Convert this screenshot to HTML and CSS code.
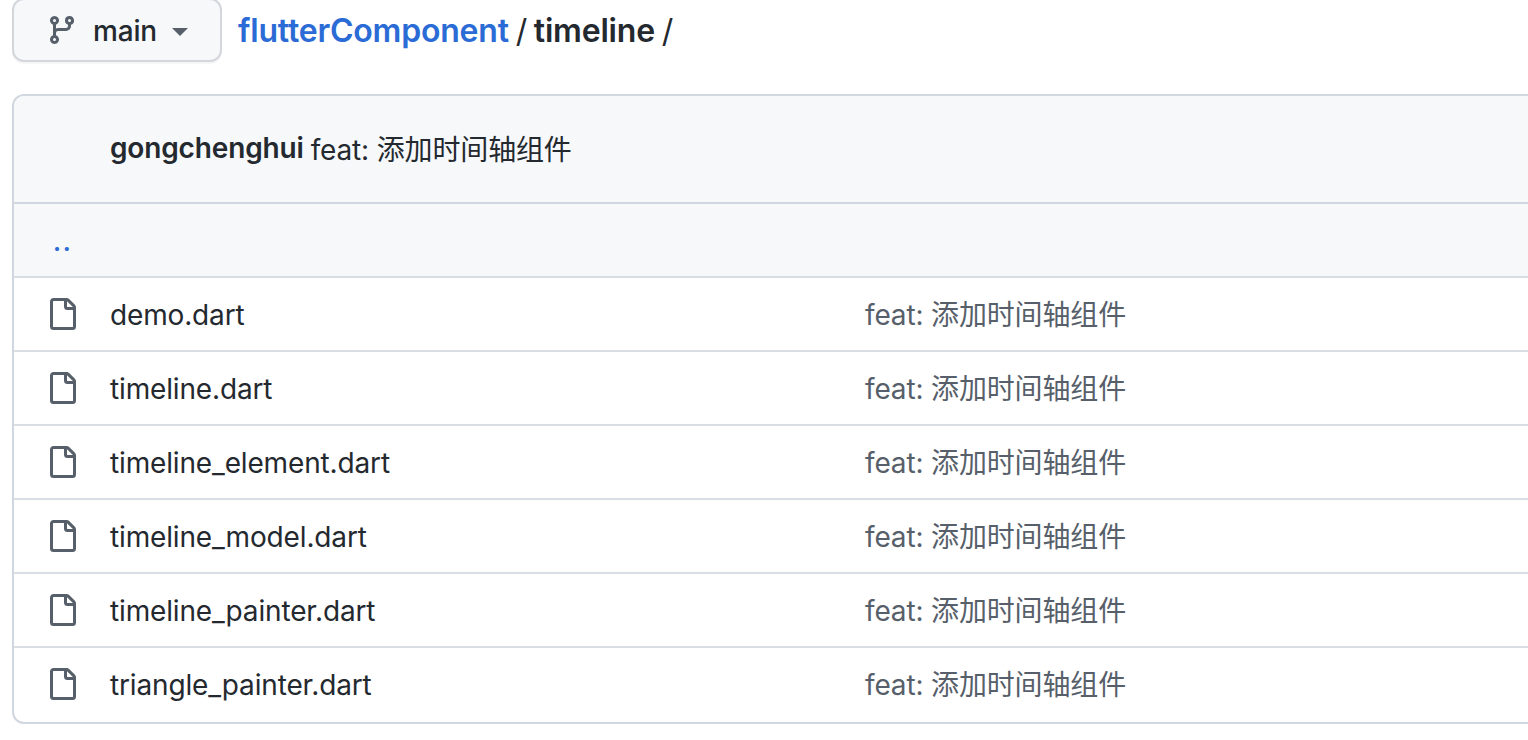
FILE: index.html
```html
<!DOCTYPE html>
<html>
<head>
  <title>flutterComponent/timeline</title>
  <link rel="stylesheet" href="styles.css">
</head>
<body>
  <div class="file-nav">
    <button class="branch-btn" type="button">
      <svg class="branch-icon" viewBox="0 0 16 16"><path d="M9.5 3.25a2.25 2.25 0 1 1 3 2.122V6A2.5 2.5 0 0 1 10 8.5H6a1 1 0 0 0-1 1v1.128a2.251 2.251 0 1 1-1.5 0V5.372a2.25 2.25 0 1 1 1.5 0v1.836A2.493 2.493 0 0 1 6 7h4a1 1 0 0 0 1-1v-.628A2.25 2.25 0 0 1 9.5 3.25Zm-6 0a.75.75 0 1 0 1.5 0 .75.75 0 0 0-1.5 0Zm8.25-.75a.75.75 0 1 0 0 1.5.75.75 0 0 0 0-1.5ZM4.25 12a.75.75 0 1 0 0 1.5.75.75 0 0 0 0-1.5Z"/></svg>
      <span class="branch-name">main</span>
      <span class="caret"></span>
    </button>
    <h2 class="breadcrumb"><a href="#">flutterComponent</a> <span class="sep">/</span> <strong>timeline</strong> <span class="sep">/</span></h2>
  </div>

  <div class="file-box">
    <div class="commit-row">
      <strong>gongchenghui</strong> <span>feat: 添加时间轴组件</span>
    </div>
    <div class="up-row"><a href="#">. .</a></div>

    <div class="file-row">
      <svg class="file-icon" viewBox="0 0 16 16"><use href="#file"/></svg>
      <a class="file-name" href="#">demo.dart</a>
      <span class="file-msg">feat: 添加时间轴组件</span>
    </div>
    <div class="file-row">
      <svg class="file-icon" viewBox="0 0 16 16"><use href="#file"/></svg>
      <a class="file-name" href="#">timeline.dart</a>
      <span class="file-msg">feat: 添加时间轴组件</span>
    </div>
    <div class="file-row">
      <svg class="file-icon" viewBox="0 0 16 16"><use href="#file"/></svg>
      <a class="file-name" href="#">timeline_element.dart</a>
      <span class="file-msg">feat: 添加时间轴组件</span>
    </div>
    <div class="file-row">
      <svg class="file-icon" viewBox="0 0 16 16"><use href="#file"/></svg>
      <a class="file-name" href="#">timeline_model.dart</a>
      <span class="file-msg">feat: 添加时间轴组件</span>
    </div>
    <div class="file-row">
      <svg class="file-icon" viewBox="0 0 16 16"><use href="#file"/></svg>
      <a class="file-name" href="#">timeline_painter.dart</a>
      <span class="file-msg">feat: 添加时间轴组件</span>
    </div>
    <div class="file-row">
      <svg class="file-icon" viewBox="0 0 16 16"><use href="#file"/></svg>
      <a class="file-name" href="#">triangle_painter.dart</a>
      <span class="file-msg">feat: 添加时间轴组件</span>
    </div>
  </div>

  <svg class="icon-defs" width="0" height="0">
    <symbol id="file" viewBox="0 0 16 16"><path d="M2 1.75C2 .784 2.784 0 3.75 0h6.586c.464 0 .909.184 1.237.513l2.914 2.914c.329.328.513.773.513 1.237v9.586A1.75 1.75 0 0 1 13.25 16h-9.5A1.75 1.75 0 0 1 2 14.25Zm1.75-.25a.25.25 0 0 0-.25.25v12.5c0 .138.112.25.25.25h9.5a.25.25 0 0 0 .25-.25V6h-2.75A1.75 1.75 0 0 1 9 4.25V1.5Zm6.75.062V4.25c0 .138.112.25.25.25h2.688l-.011-.013-2.914-2.914-.013-.011Z"/></symbol>
  </svg>
</body>
</html>
```

FILE: styles.css
```css
body {
  font-family: Inter, "Noto Sans CJK SC", sans-serif;
  font-size: 28px;
  letter-spacing: -0.15px;
  color: #24292f;
  background-color: #fff;
  margin: 0;
  padding: 0 0 0 12px;
  height: 740px;
  overflow: hidden;
}

a {
  text-decoration: none;
}

.file-nav {
  display: flex;
  align-items: center;
  height: 63px;
  margin-top: -2px;
}

.branch-btn {
  display: flex;
  align-items: center;
  width: 210px;
  height: 64px;
  padding: 0 0 0 32px;
  background-color: #f6f8fa;
  border: 2px solid #d3d7dc;
  border-radius: 12px;
  box-shadow: 0 2px 0 rgba(27, 31, 36, 0.04);
  font-family: inherit;
  font-size: 28px;
  font-weight: 500;
  letter-spacing: inherit;
  color: #24292f;
}

.branch-icon {
  width: 32px;
  height: 32px;
  fill: #57606a;
  flex-shrink: 0;
}

.branch-name {
  margin-left: 15px;
  padding-top: 2px;
}

.caret {
  margin-left: 15px;
  margin-top: 4px;
  border-top: 8px solid #57606a;
  border-left: 8px solid transparent;
  border-right: 8px solid transparent;
}

.breadcrumb {
  margin: 2px 0 0 16px;
  font-size: 32px;
  font-weight: 400;
  letter-spacing: -0.2px;
  word-spacing: -2px;
  white-space: nowrap;
}

.breadcrumb a {
  color: #2a6bd6;
  font-weight: 600;
}

.breadcrumb strong {
  font-weight: 600;
}

.file-box {
  width: 1560px;
  margin-top: 33px;
  border: 2px solid #d0d7de;
  border-radius: 12px;
  overflow: hidden;
}

.commit-row {
  display: flex;
  align-items: center;
  gap: 7px;
  height: 104px;
  padding-bottom: 2px;
  background-color: #f6f8fa;
  padding-left: 96px;
  border-bottom: 2px solid #d0d7de;
}

.commit-row strong {
  font-weight: 600;
}

.up-row {
  display: flex;
  align-items: center;
  height: 72px;
  padding-left: 39px;
  background-color: #f6f8fa;
  border-bottom: 2px solid #d8dee4;
}

.up-row a {
  margin-top: 4px;
  color: #2a6bd6;
  font-weight: 700;
  font-size: 24px;
  word-spacing: -3px;
}

.file-row {
  display: flex;
  align-items: center;
  height: 72px;
  border-bottom: 2px solid #d8dee4;
}

.file-row:last-child {
  height: 72px;
  padding-bottom: 2px;
  border-bottom: none;
}

.file-icon {
  width: 32px;
  height: 32px;
  margin-left: 32px;
  fill: #57606a;
  flex-shrink: 0;
}

.file-name {
  width: 755px;
  margin-left: 32px;
  padding-top: 2px;
  color: #24292f;
}

.file-msg {
  padding-bottom: 2px;
  color: #57606a;
}

.icon-defs {
  position: absolute;
}
```
